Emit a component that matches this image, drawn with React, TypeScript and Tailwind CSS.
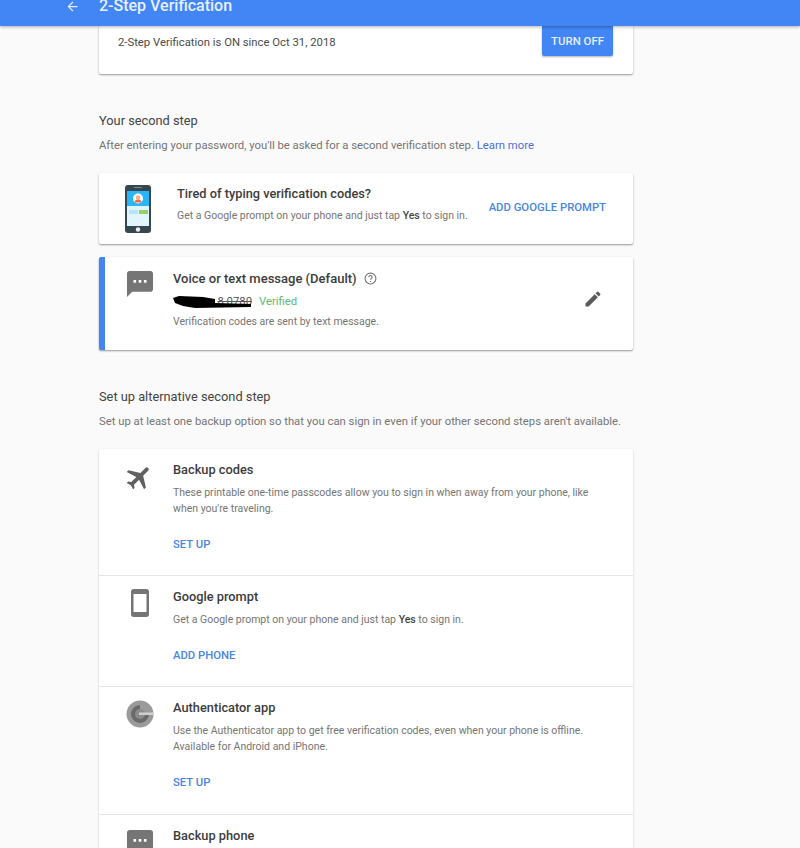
const SMS_PATH =
  "M20 2H4c-1.1 0-2 .9-2 2v18l4-4h14c1.1 0 2-.9 2-2V4c0-1.1-.9-2-2-2zM9 11H7V9h2v2zm4 0h-2V9h2v2zm4 0h-2V9h2v2z";

function SmsIcon() {
  return (
    <svg viewBox="2 2 20 20" className="h-[26px] w-[26px] fill-[#757575]">
      <path d={SMS_PATH} />
    </svg>
  );
}

function PlaneIcon() {
  return (
    <svg viewBox="0 0 24 24" className="h-[31px] w-[31px] rotate-45 fill-[#616161]">
      <path d="M21 16v-2l-8-5V3.5c0-.83-.67-1.5-1.5-1.5S10 2.67 10 3.5V9l-8 5v2l8-2.5V19l-2 1.5V22l3.5-1 3.5 1v-1.5L13 19v-5.5l8 2.5z" />
    </svg>
  );
}

function PhoneOutlineIcon() {
  return (
    <svg viewBox="0 0 18 28" className="h-[28px] w-[18px]">
      <rect x="1.25" y="1.25" width="15.5" height="25.5" rx="1.5" fill="#fff" stroke="#757575" strokeWidth="2.5" />
      <rect x="1" y="1" width="16" height="4" fill="#757575" />
      <rect x="1" y="23" width="16" height="4" fill="#757575" />
    </svg>
  );
}

function AuthenticatorIcon() {
  return (
    <svg viewBox="0 0 28 28" className="h-[28px] w-[28px]">
      <circle cx="14" cy="14" r="13.5" fill="#9a9a9a" />
      <path d="M14 5a9 9 0 1 0 9 9h-9z" fill="#6a6a6a" />
      <circle cx="14" cy="14" r="5" fill="#8c8c8c" />
      <rect x="13" y="12.5" width="14" height="2.5" fill="#cfcfcf" />
    </svg>
  );
}

function PromptPhone() {
  return (
    <svg viewBox="0 0 26 48" className="h-[48px] w-[26px]">
      <rect width="26" height="48" rx="3" fill="#37474f" />
      <rect x="9" y="2" width="8" height="1" fill="#78909c" />
      <rect x="2" y="6" width="22" height="35" fill="#e1f5fe" />
      <rect x="2" y="6" width="22" height="15" fill="#29b6f6" />
      <circle cx="13" cy="13.5" r="5" fill="#fff" />
      <circle cx="13" cy="12.5" r="2.2" fill="#f4b183" />
      <path d="M9.5 17.5a3.5 3 0 0 1 7 0z" fill="#ef6c4a" />
      <rect x="4" y="25" width="9" height="4" fill="#b3e5fc" />
      <rect x="14" y="25" width="9" height="4" fill="#9ccc65" />
      <circle cx="13" cy="44.5" r="2.2" fill="#eceff1" />
    </svg>
  );
}

function OptionRow({
  icon,
  title,
  children,
  action,
  rowClass,
}: {
  icon: React.ReactNode;
  title: string;
  children?: React.ReactNode;
  action?: string;
  rowClass: string;
}) {
  return (
    <div className={`flex border-b border-[#e4e4e4] last:border-b-0 ${rowClass}`}>
      <div className="flex w-[74px] shrink-0 justify-center pl-[7px] pt-[13px]">{icon}</div>
      <div className="pt-[12px]">
        <h3 className="text-[12.8px] leading-[17px] font-medium text-[#3c3c3c]">{title}</h3>
        {children && (
          <div className="mt-[7px] w-[425px] text-[10.5px] leading-[16px] text-[#757575]">{children}</div>
        )}
        {action && (
          <button className="mt-[20px] block text-[11.3px] leading-[16px] font-medium text-[#4a86e0]">
            {action}
          </button>
        )}
      </div>
    </div>
  );
}

export default function App() {
  return (
    <div className="h-[848px] w-full overflow-hidden bg-[#fafafa] font-['Roboto',sans-serif]">
      {/* Header */}
      <header className="relative z-10 flex h-[26px] items-end bg-[#4285f4] pb-[12px] pl-[65px] shadow-[0_1px_3px_rgba(0,0,0,0.3)]">
        <svg viewBox="0 0 24 24" className="h-[15px] w-[15px] fill-[#e3edfd]">
          <path d="M20 11H7.83l5.59-5.59L12 4l-8 8 8 8 1.41-1.41L7.83 13H20v-2z" />
        </svg>
        <span className="ml-[19px] text-[16px] leading-[16px] font-medium whitespace-nowrap text-[#e8f0fe]">
          2-Step Verification
        </span>
      </header>

      <main className="ml-[99px] w-[534px]">
        {/* Status card */}
        <section className="flex h-[48px] justify-between rounded-b-[2px] bg-white pr-[20px] pl-[19px] shadow-[0_1px_2px_rgba(0,0,0,0.4)]">
          <p className="pt-[10px] text-[11.3px] leading-[14px] text-[#4a4a4a]">
            2-Step Verification is ON since Oct 31, 2018
          </p>
          <button className="h-[30px] w-[71px] rounded-b-[2px] bg-[#4285f4] pt-[1px] text-[11.4px] font-medium text-[#e8f0fe] shadow-[0_1px_2px_rgba(0,0,0,0.3)]">
            TURN OFF
          </button>
        </section>

        {/* Second step */}
        <h2 className="mt-[38px] text-[12.8px] leading-[17px] text-[#444]">Your second step</h2>
        <p className="mt-[9px] text-[11.3px] leading-[16px] whitespace-nowrap text-[#757575]">
          After entering your password, you'll be asked for a second verification step.{" "}
          <a className="text-[#4a6fd8]">Learn more</a>
        </p>

        <section className="mt-[19px] flex h-[71px] items-center rounded-[2px] bg-white shadow-[0_1px_2px_rgba(0,0,0,0.4)]">
          <div className="ml-[26px] shrink-0">
            <PromptPhone />
          </div>
          <div className="mb-[10px] ml-[26px] flex-1">
            <h3 className="text-[12.8px] leading-[17px] font-medium text-[#3c3c3c]">
              Tired of typing verification codes?
            </h3>
            <p className="mt-[7px] text-[10.5px] leading-[14px] whitespace-nowrap text-[#757575]">
              Get a Google prompt on your phone and just tap <b className="font-medium text-[#444]">Yes</b> to sign in.
            </p>
          </div>
          <button className="mr-[27px] text-[11.3px] font-medium whitespace-nowrap text-[#4a86e0]">
            ADD GOOGLE PROMPT
          </button>
        </section>

        <section className="mt-[13px] flex h-[93px] items-start rounded-[2px] border-l-[6px] border-[#4285f4] bg-white shadow-[0_1px_2px_rgba(0,0,0,0.4)]">
          <div className="mt-[14px] ml-[22px] shrink-0">
            <SmsIcon />
          </div>
          <div className="mt-[13px] ml-[20px] flex-1">
            <div className="flex items-center">
              <h3 className="text-[13px] leading-[17px] font-medium text-[#3c3c3c]">
                Voice or text message (Default)
              </h3>
              <svg viewBox="0 0 24 24" className="ml-[7px] h-[13px] w-[13px] fill-none stroke-[#757575] stroke-2">
                <circle cx="12" cy="12" r="10" />
                <path d="M9 9.5a3 3 0 1 1 4.5 2.6c-1 .6-1.5 1.2-1.5 2.4M12 16.5v2" />
              </svg>
            </div>
            <div className="mt-[7px] flex items-center text-[11.3px] leading-[16px]">
              <span className="relative w-[79px] text-right text-[#555] line-through">
                8 0780
                <svg viewBox="0 0 80 12" className="absolute top-[2px] left-0 h-[12px] w-[80px]" fill="#000">
                  <path d="M0 2 L6 0 L30 1 L42 3 L42 7 L78 8 L78 11 L22 12 L10 10 L2 7z" />
                </svg>
              </span>
              <span className="ml-[7px] text-[#5cb874]">Verified</span>
            </div>
            <p className="mt-[4px] text-[10.5px] leading-[16px] text-[#757575]">
              Verification codes are sent by text message.
            </p>
          </div>
          <svg viewBox="0 0 24 24" className="mt-[32px] mr-[30px] h-[20px] w-[20px] fill-[#5a5a5a]">
            <path d="M3 17.25V21h3.75L17.81 9.94l-3.75-3.75L3 17.25zM20.71 7.04c.39-.39.39-1.02 0-1.41l-2.34-2.34c-.39-.39-1.02-.39-1.41 0l-1.83 1.83 3.75 3.75 1.83-1.83z" />
          </svg>
        </section>

        {/* Alternative second step */}
        <h2 className="mt-[38px] text-[12.8px] leading-[17px] text-[#444]">Set up alternative second step</h2>
        <p className="mt-[9px] text-[11.3px] leading-[16px] whitespace-nowrap text-[#757575]">
          Set up at least one backup option so that you can sign in even if your other second steps aren't available.
        </p>

        <section className="mt-[19px] rounded-[2px] bg-white shadow-[0_1px_2px_rgba(0,0,0,0.25)]">
          <OptionRow icon={<PlaneIcon />} title="Backup codes" action="SET UP" rowClass="h-[127px]">
            These printable one-time passcodes allow you to sign in when away from your phone, like
            <br />
            when you're traveling.
          </OptionRow>
          <OptionRow icon={<PhoneOutlineIcon />} title="Google prompt" action="ADD PHONE" rowClass="h-[111px]">
            Get a Google prompt on your phone and just tap <b className="font-medium text-[#444]">Yes</b> to sign in.
          </OptionRow>
          <OptionRow icon={<AuthenticatorIcon />} title="Authenticator app" action="SET UP" rowClass="h-[128px]">
            Use the Authenticator app to get free verification codes, even when your phone is offline. Available for
            Android and iPhone.
          </OptionRow>
          <OptionRow
            icon={
              <div className="mt-[2px]">
                <SmsIcon />
              </div>
            }
            title="Backup phone"
            rowClass="h-[60px]"
          />
        </section>
      </main>
    </div>
  );
}
